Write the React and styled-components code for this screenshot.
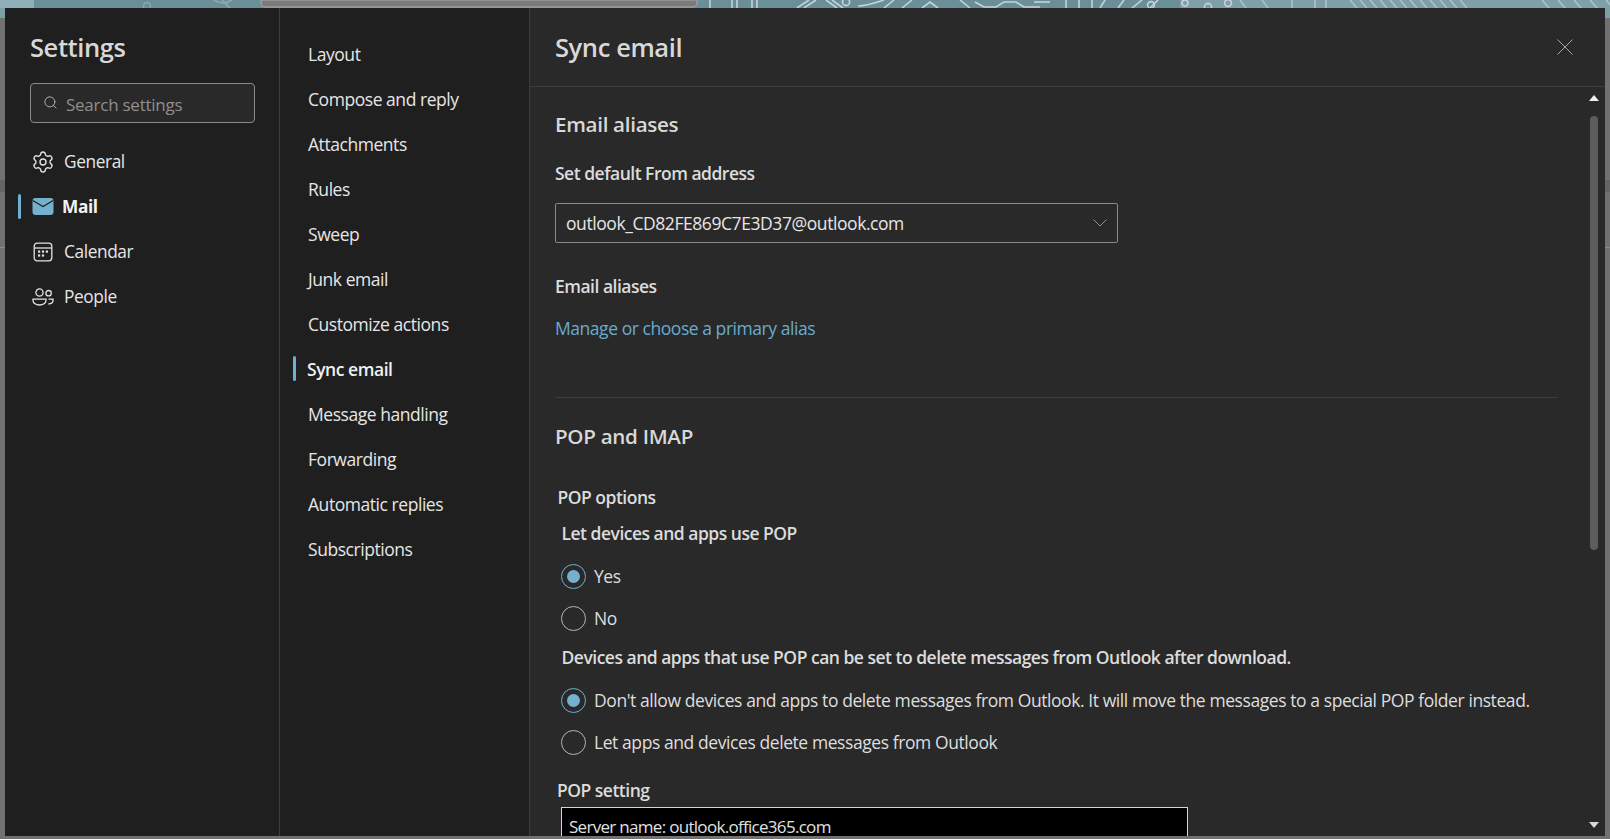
import React from 'react';
import styled, { createGlobalStyle } from 'styled-components';
import { Settings as Gear, Search } from 'lucide-react';

const GlobalStyle = createGlobalStyle`
  html, body {
    margin: 0;
    padding: 0;
    height: 100%;
    overflow: hidden;
  }
  body {
    font-family: "Open Sans", "Noto Sans", "Liberation Sans", sans-serif;
  }
`;

const Page = styled.div`
  width: 1610px;
  height: 839px;
  overflow: hidden;
  display: flex;
  flex-direction: column;
  background:
    linear-gradient(#7f9fa8 0 18px, transparent 18px),
    linear-gradient(transparent 180px, #646464 180px 192px, transparent 192px 247px, #8a8a8a 247px 248px, transparent 248px),
    #717171;
`;

const Wallpaper = styled.svg`
  display: block;
  flex: none;
`;

const Modal = styled.div`
  flex: none;
  height: 828px;
  margin: 0 5px;
  display: flex;
  background: #1f1f1f;
`;

const NavColumn = styled.nav`
  flex: none;
  width: 275px;
  box-sizing: border-box;
  padding: 0 0 0 13px;
  border-right: 1px solid #3d3d3d;
`;

const SettingsTitle = styled.h1`
  margin: 21px 0 0 12px;
  height: 36px;
  font-size: 25.5px;
  line-height: 36px;
  font-weight: 600;
  letter-spacing: -0.4px;
  color: #d8d8d8;
`;

const SearchBox = styled.div`
  margin: 18px 0 0 12px;
  width: 225px;
  height: 40px;
  box-sizing: border-box;
  display: flex;
  align-items: center;
  gap: 8px;
  padding: 2px 0 0 12px;
  background: #292929;
  border: 1px solid #8a8a8a;
  border-radius: 4px;
  font-size: 17px;
  letter-spacing: -0.25px;
  color: #8f8f8f;
  svg {
    margin-top: -4px;
  }
`;

const NavList = styled.div`
  margin-top: 16px;
  display: flex;
  flex-direction: column;
`;

const NavItem = styled.div`
  height: 45px;
  display: flex;
  align-items: center;
  position: relative;
  padding-left: 13px;
  gap: ${(p) => (p.$active ? 7 : 9)}px;
  font-size: 17.3px;
  letter-spacing: -0.4px;
  font-weight: ${(p) => (p.$active ? 700 : 400)};
  color: ${(p) => (p.$active ? '#f2f2f2' : '#e6e6e6')};
  &::before {
    content: '';
    display: ${(p) => (p.$active ? 'block' : 'none')};
    position: absolute;
    left: 0;
    top: 10px;
    width: 3px;
    height: 25px;
    border-radius: 2px;
    background: #6fb0cf;
  }
`;

const IconSlot = styled.span`
  flex: none;
  width: 24px;
  height: 24px;
  display: flex;
  align-items: center;
  justify-content: center;
  color: #e2e2e2;
`;

const SubColumn = styled.nav`
  flex: none;
  width: 250px;
  box-sizing: border-box;
  padding: 23px 0 0 13px;
  border-right: 1px solid #3d3d3d;
  display: flex;
  flex-direction: column;
`;

const SubItem = styled.div`
  height: 45px;
  display: flex;
  align-items: center;
  position: relative;
  padding-left: 15px;
  font-size: 17.5px;
  letter-spacing: -0.45px;
  font-weight: ${(p) => (p.$active ? 600 : 400)};
  margin-left: ${(p) => (p.$active ? '-1px' : '0')};
  color: ${(p) => (p.$active ? '#f0f0f0' : '#e6e6e6')};
  &::before {
    content: '';
    display: ${(p) => (p.$active ? 'block' : 'none')};
    position: absolute;
    left: 1px;
    top: 10px;
    width: 3px;
    height: 25px;
    border-radius: 2px;
    background: #6fb0cf;
  }
`;

const Main = styled.main`
  flex: 1;
  min-width: 0;
  display: flex;
  flex-direction: column;
  background: #292929;
`;

const MainHeader = styled.header`
  flex: none;
  height: 79px;
  box-sizing: border-box;
  display: flex;
  align-items: center;
  justify-content: space-between;
  padding: 0 32px 0 25px;
  border-bottom: 1px solid #3d3d3d;
`;

const MainTitle = styled.h2`
  margin: 0;
  font-size: 25.5px;
  line-height: 36px;
  font-weight: 600;
  letter-spacing: -0.4px;
  color: #d8d8d8;
`;

const MainBody = styled.div`
  flex: 1;
  min-height: 0;
  display: flex;
`;

const Content = styled.div`
  flex: none;
  width: 1028px;
  box-sizing: border-box;
  padding-left: 25px;
  overflow: hidden;
`;

const SectionTitle = styled.h3`
  margin: ${(p) => p.$top}px 0 0;
  height: 30px;
  font-size: 20.6px;
  line-height: 30px;
  font-weight: 600;
  letter-spacing: -0.3px;
  color: #d8d8d8;
`;

const Label = styled.div`
  margin: ${(p) => p.$top}px 0 0 ${(p) => p.$left || 0}px;
  height: 24px;
  font-size: 17.5px;
  line-height: 24px;
  font-weight: 600;
  letter-spacing: -0.5px;
  white-space: nowrap;
  color: #dcdcdc;
`;

const Dropdown = styled.div`
  margin-top: 18px;
  width: 563px;
  height: 40px;
  box-sizing: border-box;
  display: flex;
  align-items: center;
  justify-content: space-between;
  padding: 0 10px 0 10px;
  border: 1px solid #8a8a8a;
  border-radius: 2px;
  font-size: 17.5px;
  letter-spacing: -0.43px;
  color: #e6e6e6;
`;

const AliasLink = styled.a`
  display: block;
  margin-top: 18px;
  height: 24px;
  font-size: 17.5px;
  line-height: 24px;
  letter-spacing: -0.45px;
  color: #69abd0;
`;

const Divider = styled.hr`
  margin: 57px 0 0;
  width: 1003px;
  height: 1px;
  border: 0;
  background: #3d3d3d;
`;

const RadioRow = styled.div`
  margin: ${(p) => p.$top}px 0 0 6px;
  height: 25px;
  display: flex;
  align-items: center;
  gap: 8px;
  font-size: 17.5px;
  letter-spacing: -0.42px;
  white-space: nowrap;
  color: #dedede;
`;

const RadioText = styled.span`
  margin-top: -2px;
`;

const RadioMark = styled.span`
  flex: none;
  width: 25px;
  height: 25px;
  box-sizing: border-box;
  display: flex;
  align-items: center;
  justify-content: center;
  border-radius: 50%;
  border: 1.5px solid ${(p) => (p.$checked ? '#6fb0cf' : '#b4b4b4')};
  &::after {
    content: '';
    display: ${(p) => (p.$checked ? 'block' : 'none')};
    width: 13px;
    height: 13px;
    border-radius: 50%;
    background: #74b1cf;
  }
`;

const ServerBox = styled.div`
  margin: 5px 0 0 6px;
  width: 627px;
  height: 60px;
  box-sizing: border-box;
  padding: 6px 0 0 7px;
  background: #000;
  border: 1px solid #d6d6d6;
  font-size: 17px;
  line-height: 26px;
  letter-spacing: -0.7px;
  color: #e0e0e0;
`;

const ScrollTrack = styled.div`
  flex: 1;
  display: flex;
  flex-direction: column;
  align-items: center;
  padding: 8px 0 0 25px;
`;

const ArrowUp = styled.span`
  width: 0;
  height: 0;
  border-left: 5px solid transparent;
  border-right: 5px solid transparent;
  border-bottom: 6px solid #f0f0f0;
`;

const ArrowDown = styled.span`
  width: 0;
  height: 0;
  margin-top: 272px;
  border-left: 5px solid transparent;
  border-right: 5px solid transparent;
  border-top: 6px solid #d8d8d8;
`;

const ScrollThumb = styled.span`
  margin-top: 15px;
  width: 8px;
  height: 434px;
  border-radius: 4px;
  background: #5c5c5c;
`;

const CloseIcon = () => (
  <svg width="16" height="16" viewBox="0 0 16 16" fill="none" stroke="#a8a8a8" strokeWidth="1">
    <path d="M0.5 0.5 L15.5 15.5 M15.5 0.5 L0.5 15.5" />
  </svg>
);

const Chevron = () => (
  <svg width="14" height="8" viewBox="0 0 14 8" fill="none" stroke="#8c8c8c" strokeWidth="1">
    <path d="M0.5 0.5 L7 7 L13.5 0.5" />
  </svg>
);

const MailIcon = () => (
  <svg width="22" height="17" viewBox="0 0 22 17">
    <rect x="0.5" y="0" width="21" height="17" rx="3" fill="#74b1cf" />
    <path d="M0.8 2.6 L11 8.6 L21.2 2.6" fill="none" stroke="#1f1f1f" strokeWidth="1.2" />
  </svg>
);

const CalendarIcon = () => (
  <svg width="20" height="20" viewBox="0 0 20 20" fill="none" stroke="currentColor" strokeWidth="1.3">
    <rect x="1.2" y="1.2" width="17.6" height="17.6" rx="3" />
    <path d="M1.2 6 H18.8" />
    <g fill="currentColor" stroke="none">
      <rect x="5" y="8.5" width="2.2" height="2.2" />
      <rect x="8.9" y="8.5" width="2.2" height="2.2" />
      <rect x="12.8" y="8.5" width="2.2" height="2.2" />
      <rect x="5" y="12.4" width="2.2" height="2.2" />
      <rect x="8.9" y="12.4" width="2.2" height="2.2" />
    </g>
  </svg>
);

const PeopleIcon = () => (
  <svg width="22" height="18" viewBox="0 0 22 18" fill="none" stroke="currentColor" strokeWidth="1.3">
    <circle cx="7.5" cy="4.5" r="3.6" />
    <circle cx="16.6" cy="5.2" r="2.7" />
    <path d="M1 11.2 H14 V12.6 C14 15.2 11 17 7.5 17 C4 17 1 15.2 1 12.6 Z" />
    <path d="M16.4 16 C19 16 21 14.7 21 12.6 V11.2 H16.6" />
  </svg>
);

// circuit lines of the wallpaper, only its lowest 8px show above the dialog
const circuitLines = [
  'M710 0V8', 'M732 0V8', 'M737 0V8', 'M752 0V8', 'M757 0V8',
  'M797 8L809 0', 'M804 8L816 0', 'M826 0L837 8', 'M832 0L843 8',
  'M858 6C866 6 878 2 884 0', 'M884 8L894 0', 'M902 8L912 0', 'M922 8L930 2L938 8',
  'M960 0L970 8', 'M975 2L984 7L996 7L1004 2L1016 2L1024 7L1040 7', 'M1034 2H1050',
  'M1066 0V8', 'M1079 0V8', 'M1092 0V8', 'M1105 0L1100 8', 'M1124 0L1118 8',
  'M1142 0L1132 8', 'M1158 0L1150 8',
];
const stripes = Array.from({ length: 22 }, (_, i) => {
  const x = 1350 + i * (i < 12 ? 10 : 16);
  return `M${x} 0L${x + 7} 8`;
});

const CircuitStrip = () => (
  <Wallpaper width="1610" height="8" viewBox="0 0 1610 8">
    <rect width="1610" height="8" fill="#6b8f99" />
    <rect width="34" height="8" fill="#8fb0b8" />
    <rect x="1180" width="430" height="8" fill="#7f9fa9" />
    <path d="M222 0L230 8M214 0C220 4 226 4 232 0" stroke="#8aa7ae" strokeWidth="2" fill="none" />
    <circle cx="147" cy="6" r="3.5" fill="none" stroke="#8aa7ae" strokeWidth="1.5" />
    <path d="M261 0V2Q261 7 266 7H692Q697 7 697 2V0Z" fill="#7a7a7a" stroke="#aaaaaa" />
    <g fill="none" stroke="#c5d4d8" strokeWidth="1.6">
      {circuitLines.map((d) => (
        <path key={d} d={d} />
      ))}
      <circle cx="846" cy="2" r="3.6" />
      <circle cx="1151" cy="5" r="3.4" />
      <circle cx="1185" cy="3" r="3" />
      <circle cx="1208" cy="7" r="3.6" />
      <circle cx="1228" cy="3" r="3.4" />
    </g>
    <g fill="none" stroke="#a6c0c7" strokeWidth="1.8">
      {stripes.map((d) => (
        <path key={d} d={d} />
      ))}
      <path d="M1240 0L1246 8M1262 0L1268 8M1292 0V8M1315 0V8M1326 0V8" />
    </g>
  </Wallpaper>
);

const mainNav = [
  { name: 'General', icon: <Gear size={24} strokeWidth={1.35} /> },
  { name: 'Mail', icon: <MailIcon />, active: true },
  { name: 'Calendar', icon: <CalendarIcon /> },
  { name: 'People', icon: <PeopleIcon /> },
];

const subNav = [
  'Layout', 'Compose and reply', 'Attachments', 'Rules', 'Sweep', 'Junk email',
  'Customize actions', 'Sync email', 'Message handling', 'Forwarding',
  'Automatic replies', 'Subscriptions',
];

const Radio = ({ top, checked, children }) => (
  <RadioRow $top={top}>
    <RadioMark $checked={checked} />
    <RadioText>{children}</RadioText>
  </RadioRow>
);

export default function App() {
  return (
    <Page>
      <GlobalStyle />
      <CircuitStrip />
      <Modal>
        <NavColumn>
          <SettingsTitle>Settings</SettingsTitle>
          <SearchBox>
            <Search size={15} strokeWidth={1.5} color="#b5b5b5" />
            Search settings
          </SearchBox>
          <NavList>
            {mainNav.map((item) => (
              <NavItem key={item.name} $active={item.active}>
                <IconSlot>{item.icon}</IconSlot>
                {item.name}
              </NavItem>
            ))}
          </NavList>
        </NavColumn>
        <SubColumn>
          {subNav.map((name) => (
            <SubItem key={name} $active={name === 'Sync email'}>{name}</SubItem>
          ))}
        </SubColumn>
        <Main>
          <MainHeader>
            <MainTitle>Sync email</MainTitle>
            <CloseIcon />
          </MainHeader>
          <MainBody>
            <Content>
              <SectionTitle $top={22}>Email aliases</SectionTitle>
              <Label $top={22}>Set default From address</Label>
              <Dropdown>
                outlook_CD82FE869C7E3D37@outlook.com
                <Chevron />
              </Dropdown>
              <Label $top={31}>Email aliases</Label>
              <AliasLink>Manage or choose a primary alias</AliasLink>
              <Divider />
              <SectionTitle $top={23}>POP and IMAP</SectionTitle>
              <Label $top={34} $left={2.5}>POP options</Label>
              <Label $top={12} $left={6.5}>Let devices and apps use POP</Label>
              <Radio top={19} checked>Yes</Radio>
              <Radio top={17}>No</Radio>
              <Label $top={14} $left={6.5}>Devices and apps that use POP can be set to delete messages from Outlook after download.</Label>
              <Radio top={19} checked>Don't allow devices and apps to delete messages from Outlook. It will move the messages to a special POP folder instead.</Radio>
              <Radio top={17}>Let apps and devices delete messages from Outlook</Radio>
              <Label $top={23} $left={2}>POP setting</Label>
              <ServerBox>Server name: outlook.office365.com</ServerBox>
            </Content>
            <ScrollTrack>
              <ArrowUp />
              <ScrollThumb />
              <ArrowDown />
            </ScrollTrack>
          </MainBody>
        </Main>
      </Modal>
    </Page>
  );
}
